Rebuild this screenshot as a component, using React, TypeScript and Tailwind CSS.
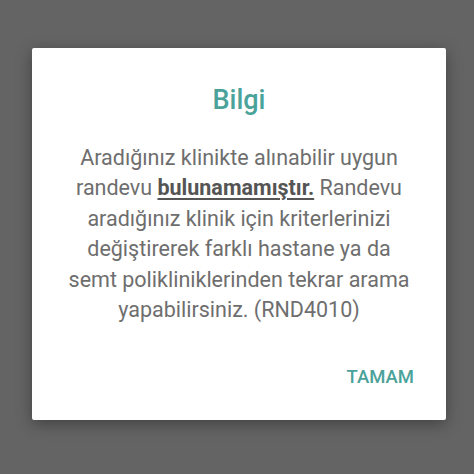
export default function App() {
  return (
    <div className="h-[474px] w-[474px] bg-[#646464] pt-[48px] pl-[32px] font-['Roboto',sans-serif]">
      <div className="w-[414px] h-[372px] bg-white rounded-[2px] shadow-[0_4px_16px_rgba(0,0,0,0.35)] flex flex-col">
        <h1 className="mt-[36px] text-center text-[27px] font-medium text-[#4aa29a] leading-[32px]">Bilgi</h1>
        <p className="mt-[27px] px-[36px] text-center text-[21.5px] leading-[30.4px] text-[#6e6e6e]">
          Aradığınız klinikte alınabilir uygun randevu{' '}
          <span className="font-bold underline underline-offset-[3px] text-[#555555]">bulunamamıştır.</span>{' '}
          Randevu aradığınız klinik için kriterlerinizi değiştirerek farklı hastane ya da semt polikliniklerinden tekrar arama yapabilirsiniz. (RND4010)
        </p>
        <div className="mt-auto mb-[28px] flex justify-end pr-[32px]">
          <button className="text-[18.5px] font-medium text-[#4aa29a]">TAMAM</button>
        </div>
      </div>
    </div>
  )
}
